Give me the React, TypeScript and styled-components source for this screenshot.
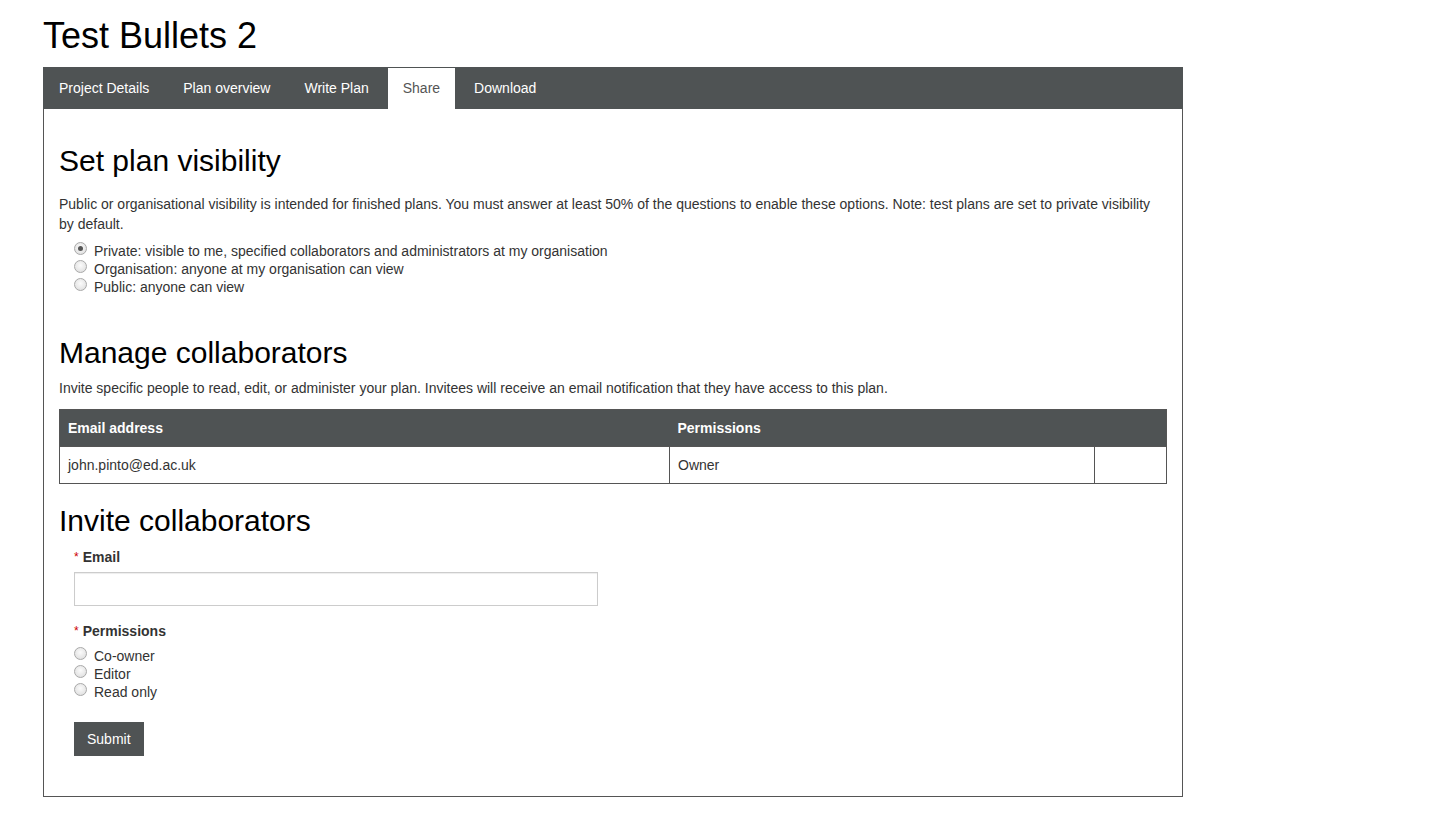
import React, { useState } from 'react';
import styled, { createGlobalStyle } from 'styled-components';

const dark = '#4f5354';

const GlobalStyle = createGlobalStyle`
  html, body {
    margin: 0;
    padding: 0;
    background: #fff;
  }
  body {
    font-family: "Liberation Sans", Arial, sans-serif;
    font-size: 14px;
    line-height: 20px;
    color: #333;
  }
  * {
    box-sizing: border-box;
  }
`;

const Page = styled.div`
  width: 1183px;
  padding: 16px 0 16px 43px;
`;

const Title = styled.h1`
  margin: 0 0 11px;
  font-size: 36px;
  line-height: 40px;
  font-weight: 400;
  color: #000;
`;

const TabBar = styled.nav`
  display: flex;
  align-items: flex-end;
  gap: 4px;
  height: 42px;
  padding: 1px 0 0 1px;
  background: ${dark};
`;

const Tab = styled.a<{ $active?: boolean }>`
  display: block;
  height: 41px;
  padding: 10px 15px 11px;
  font-size: 14px;
  line-height: 20px;
  color: ${(p) => (p.$active ? '#555' : '#fff')};
  background: ${(p) => (p.$active ? '#fff' : 'transparent')};
  text-decoration: none;
  cursor: pointer;
`;

const Panel = styled.section`
  border: 1px solid #555;
  border-top: none;
  padding: 35px 15px 40px;
`;

const Heading = styled.h2<{ $top?: number }>`
  margin: ${(p) => p.$top ?? 0}px 0 0;
  font-size: 30px;
  line-height: 33px;
  font-weight: 400;
  color: #000;
`;

const Text = styled.p<{ $top?: number }>`
  margin: ${(p) => p.$top ?? 0}px 0 0;
`;

const RadioList = styled.div<{ $top?: number; $indent?: number }>`
  display: flex;
  flex-direction: column;
  margin-top: ${(p) => p.$top ?? 0}px;
  padding-left: ${(p) => p.$indent ?? 0}px;
`;

const RadioRow = styled.label`
  display: flex;
  align-items: flex-start;
  gap: 7px;
  height: 18px;
  line-height: 18px;
  cursor: pointer;
`;

const Radio = styled.input.attrs({ type: 'radio' })`
  appearance: none;
  flex: none;
  width: 13px;
  height: 13px;
  margin: 0;
  border-radius: 50%;
  border: 1px solid #a9a9a9;
  background: radial-gradient(circle at 50% 40%, #fbfbfb 0%, #e4e4e4 70%, #d2d2d2 100%);
  position: relative;

  &:checked::after {
    content: '';
    position: absolute;
    left: 3px;
    top: 3px;
    width: 5px;
    height: 5px;
    border-radius: 50%;
    background: #555;
  }
`;

const Table = styled.table`
  width: 100%;
  margin-top: 11px;
  border-collapse: collapse;
  border: 1px solid #555;
`;

const HeadCell = styled.th`
  height: 37px;
  padding: 8px;
  text-align: left;
  font-weight: 700;
  color: #fff;
  background: ${dark};
`;

const Cell = styled.td<{ $width?: number }>`
  height: 37px;
  padding: 8px;
  border: 1px solid #555;
  width: ${(p) => (p.$width ? `${p.$width}px` : 'auto')};
`;

const Form = styled.form`
  padding: 10px 0 0 15px;
`;

const Label = styled.div<{ $top?: number }>`
  margin-top: ${(p) => p.$top ?? 0}px;
  font-weight: 700;
  color: #333;
`;

const Required = styled.span`
  color: #c00;
  margin-right: 4px;
  font-size: 12px;
  font-weight: 400;
  vertical-align: top;
`;

const TextInput = styled.input`
  display: block;
  width: 524px;
  height: 34px;
  margin-top: 5px;
  border: 1px solid #ccc;
  box-shadow: inset 0 1px 1px rgba(0, 0, 0, 0.075);
  padding: 6px 12px;
  font: inherit;
`;

const SubmitButton = styled.button`
  display: block;
  margin-top: 21px;
  height: 34px;
  padding: 6px 13px;
  border: none;
  background: ${dark};
  color: #fff;
  font-family: inherit;
  font-size: 14px;
  line-height: 20px;
  cursor: pointer;
`;

const tabs = ['Project Details', 'Plan overview', 'Write Plan', 'Share', 'Download'];

const visibility = [
  'Private: visible to me, specified collaborators and administrators at my organisation',
  'Organisation: anyone at my organisation can view',
  'Public: anyone can view',
];

const permissions = ['Co-owner', 'Editor', 'Read only'];

export default function App() {
  const [vis, setVis] = useState(0);
  const [perm, setPerm] = useState<number | null>(null);
  const [email, setEmail] = useState('');

  return (
    <>
      <GlobalStyle />
      <Page>
        <Title>Test Bullets 2</Title>
        <TabBar>
          {tabs.map((t) => (
            <Tab key={t} $active={t === 'Share'}>
              {t}
            </Tab>
          ))}
        </TabBar>
        <Panel>
          <Heading>Set plan visibility</Heading>
          <Text $top={17}>
            Public or organisational visibility is intended for finished plans. You must answer at
            least 50% of the questions to enable these options. Note: test plans are set to private
            visibility by default.
          </Text>
          <RadioList $top={8} $indent={15}>
            {visibility.map((v, i) => (
              <RadioRow key={v}>
                <Radio name="visibility" checked={vis === i} onChange={() => setVis(i)} />
                {v}
              </RadioRow>
            ))}
          </RadioList>

          <Heading $top={40}>Manage collaborators</Heading>
          <Text $top={9}>
            Invite specific people to read, edit, or administer your plan. Invitees will receive an
            email notification that they have access to this plan.
          </Text>
          <Table>
            <thead>
              <tr>
                <HeadCell>Email address</HeadCell>
                <HeadCell>Permissions</HeadCell>
                <HeadCell />
              </tr>
            </thead>
            <tbody>
              <tr>
                <Cell $width={610}>john.pinto@ed.ac.uk</Cell>
                <Cell $width={425}>Owner</Cell>
                <Cell />
              </tr>
            </tbody>
          </Table>

          <Heading $top={20}>Invite collaborators</Heading>
          <Form onSubmit={(e) => e.preventDefault()}>
            <Label>
              <Required>*</Required>Email
            </Label>
            <TextInput type="email" value={email} onChange={(e) => setEmail(e.target.value)} />
            <Label $top={15}>
              <Required>*</Required>Permissions
            </Label>
            <RadioList $top={6}>
              {permissions.map((p, i) => (
                <RadioRow key={p}>
                  <Radio name="permissions" checked={perm === i} onChange={() => setPerm(i)} />
                  {p}
                </RadioRow>
              ))}
            </RadioList>
            <SubmitButton type="submit">Submit</SubmitButton>
          </Form>
        </Panel>
      </Page>
    </>
  );
}
